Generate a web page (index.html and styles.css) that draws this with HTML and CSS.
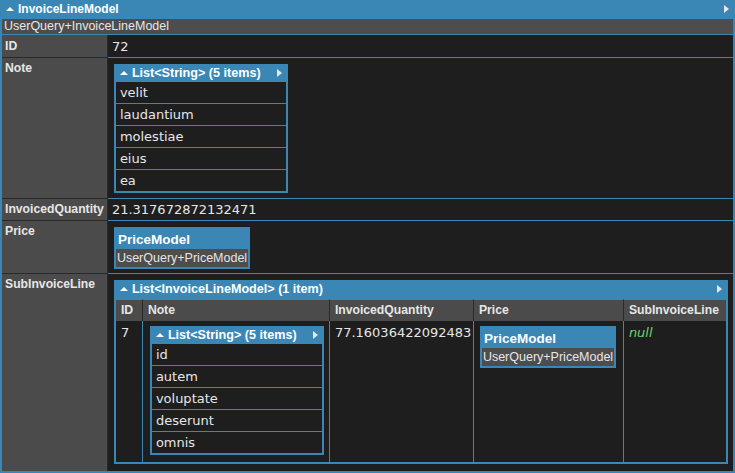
FILE: index.html
```html
<!DOCTYPE html>
<html>
<head>
<meta charset="utf-8">
<link rel="stylesheet" href="styles.css">
</head>
<body>
<table class="obj outer">
  <tr><td class="title" colspan="2"><span class="up"></span>InvoiceLineModel<span class="right"></span></td></tr>
  <tr><td class="type" colspan="2">UserQuery+InvoiceLineModel</td></tr>
  <tr class="r-id"><th class="lbl">ID</th><td class="val">72</td></tr>
  <tr class="r-note"><th class="lbl">Note</th><td class="val">
    <table class="list">
      <tr><td class="title"><span class="up"></span>List&lt;String&gt; (5 items)<span class="right"></span></td></tr>
      <tr><td class="item">velit</td></tr>
      <tr><td class="item">laudantium</td></tr>
      <tr><td class="item">molestiae</td></tr>
      <tr><td class="item">eius</td></tr>
      <tr><td class="item">ea</td></tr>
    </table>
  </td></tr>
  <tr class="r-iq"><th class="lbl">InvoicedQuantity</th><td class="val">21.317672872132471</td></tr>
  <tr class="r-price"><th class="lbl">Price</th><td class="val">
    <table class="pm">
      <tr><td class="pmhead">PriceModel</td></tr>
      <tr><td class="pmtype">UserQuery+PriceModel</td></tr>
    </table>
  </td></tr>
  <tr class="r-sub"><th class="lbl">SubInvoiceLine</th><td class="val">
    <table class="sub">
      <colgroup><col class="k1"><col class="k2"><col class="k3"><col class="k4"><col class="k5"></colgroup>
      <tr><td class="title" colspan="5"><span class="up"></span>List&lt;InvoiceLineModel&gt; (1 item)<span class="right"></span></td></tr>
      <tr class="colhead"><th class="c1">ID</th><th class="c2">Note</th><th class="c3">InvoicedQuantity</th><th class="c4">Price</th><th class="c5">SubInvoiceLine</th></tr>
      <tr class="row">
        <td class="c1">7</td>
        <td class="c2">
          <table class="list">
            <tr><td class="title"><span class="up"></span>List&lt;String&gt; (5 items)<span class="right"></span></td></tr>
            <tr><td class="item">id</td></tr>
            <tr><td class="item">autem</td></tr>
            <tr><td class="item">voluptate</td></tr>
            <tr><td class="item">deserunt</td></tr>
            <tr><td class="item">omnis</td></tr>
          </table>
        </td>
        <td class="c3">77.16036422092483</td>
        <td class="c4">
          <table class="pm">
            <tr><td class="pmhead">PriceModel</td></tr>
            <tr><td class="pmtype">UserQuery+PriceModel</td></tr>
          </table>
        </td>
        <td class="c5"><span class="null">null</span></td>
      </tr>
    </table>
  </td></tr>
</table>
</body>
</html>
```
FILE: styles.css
```css
html, body {
  margin: 0;
  padding: 0;
  background: #1e1e1e;
}
body {
  font-family: "DejaVu Sans", Verdana, sans-serif;
  font-size: 13px;
  color: #e6e6e6;
}
table {
  border-collapse: separate;
  border-spacing: 0;
}
td, th {
  vertical-align: top;
  text-align: left;
  padding: 0;
}
.outer {
  width: 735px;
  border: 2px solid #3a87b5;
  border-top: 0;
  background: #1e1e1e;
}
.title {
  background: #3a87b5;
  color: #fff;
  font-family: "Liberation Sans", Arial, sans-serif;
  font-weight: bold;
  font-size: 12.6px;
  height: 18px;
  line-height: 18px;
  padding: 0 4px 0 4px;
  white-space: nowrap;
}
.up {
  display: inline-block;
  width: 0;
  height: 0;
  border-left: 4px solid transparent;
  border-right: 4px solid transparent;
  border-bottom: 4px solid #fff;
  margin: 0 4px 2px 0;
  vertical-align: middle;
}
.right {
  float: right;
  width: 0;
  height: 0;
  border-top: 4px solid transparent;
  border-bottom: 4px solid transparent;
  border-left: 5px solid #e8e8e8;
  margin-top: 5px;
}
.outer > tbody > tr > .title {
  height: 19px;
  line-height: 19px;
  font-size: 12px;
}
.type {
  background: #4d4d4d;
  color: #e6e6e6;
  font-family: "Liberation Sans", Arial, sans-serif;
  font-size: 12.5px;
  height: 15px;
  line-height: 15px;
  padding: 0 2px;
  border-bottom: 1px solid #3a87b5;
  white-space: nowrap;
}
.lbl {
  width: 98px;
  background: #4b4b4b;
  color: #e6e6e6;
  font-family: "Liberation Sans", Arial, sans-serif;
  font-weight: bold;
  font-size: 12.2px;
  line-height: 16px;
  padding: 2px 3px 2px 3px;
  border-top: 1px solid #2a2a2a;
  border-right: 1px solid #2a2a2a;
  white-space: nowrap;
}
.val {
  background: #1e1e1e;
  border-top: 1px solid #3a87b5;
  padding: 3px 4px 2px 4px;
  line-height: 16px;
  white-space: nowrap;
}
.r-id > .lbl, .r-id > .val { border-top: 0; height: 16px; }
.r-id > .val { padding-top: 4px; }
.r-id > .lbl { padding-top: 3px; }
.r-note > .val { padding: 6px 4px 5px 6px; }
.r-price > .val { padding: 6px 4px 4px 6px; }
.r-sub > .val { padding: 6px 4px 7px 6px; }
.list {
  border: 2px solid #3a87b5;
  border-top: 0;
  width: 174px;
}
.list .title {
  height: 18px;
  line-height: 18px;
}
.item {
  background: #1e1e1e;
  border-top: 1px solid #3a87b5;
  padding: 2px 4px 2px 4px;
  height: 17px;
  line-height: 17px;
}
.list tr:nth-child(2) .item { border-top: 0; }
.pm {
  border: 2px solid #3a87b5;
  background: #3a87b5;
}
.pmhead {
  color: #fff;
  font-family: "Liberation Sans", Arial, sans-serif;
  font-weight: bold;
  font-size: 13.5px;
  padding: 2px 2px 1px 2px;
  line-height: 17px;
}
.pmtype {
  background: #4d4d4d;
  color: #e6e6e6;
  font-family: "Liberation Sans", Arial, sans-serif;
  font-size: 12.5px;
  line-height: 18px;
  padding: 0 1px;
  white-space: nowrap;
}
.sub {
  border: 2px solid #3a87b5;
  border-top: 0;
  width: 614px;
  table-layout: fixed;
}
.k1 { width: 26px; }
.k2 { width: 187px; }
.k3 { width: 144px; }
.k4 { width: 150px; }
.k5 { width: 103px; }
.sub > tbody > tr > .title { height: 19px; line-height: 19px; }
.colhead > th {
  background: #4b4b4b;
  color: #e6e6e6;
  font-family: "Liberation Sans", Arial, sans-serif;
  font-weight: bold;
  font-size: 12.2px;
  height: 17px;
  line-height: 17px;
  padding: 2px 2px 2px 5px;
  border-left: 1px solid #2a2a2a;
  border-top: 1px solid #3a87b5;
  white-space: nowrap;
  overflow: hidden;
}
.colhead > th.c1 { border-left: 0; padding-left: 5px; }
.row > td {
  background: #1e1e1e;
  border-left: 1px solid #3a87b5;
  padding: 4px 2px 4px 5px;
  line-height: 16px;
  white-space: nowrap;
}
.row > td.c1 { border-left: 0; padding-left: 5px; }
.row > .c2 { padding: 5px 2px 7px 7px; }
.row > .c4 { padding: 5px 2px 4px 6px; }
.null {
  color: #6ad66a;
  font-style: italic;
}
```
